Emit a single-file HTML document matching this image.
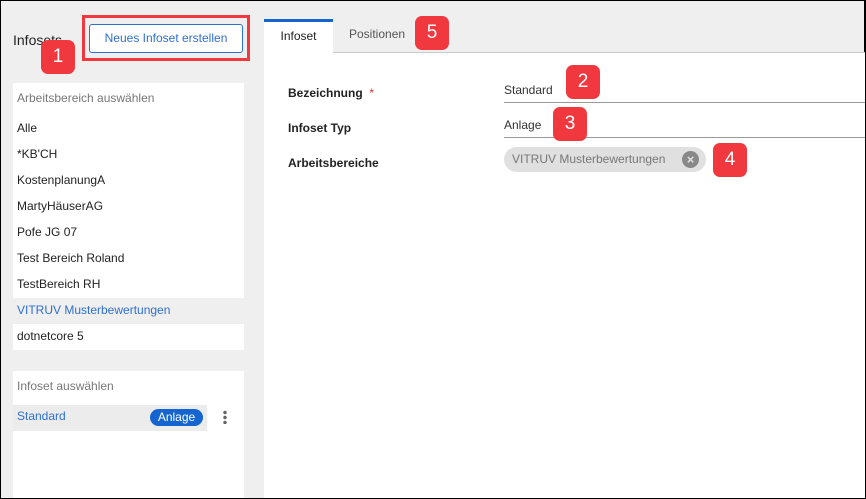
<!DOCTYPE html><html><head><style>
*{margin:0;padding:0;box-sizing:border-box}
body{width:866px;height:499px;overflow:hidden;font-family:"Liberation Sans",sans-serif;font-size:12px;color:#222;background:#000;position:relative}
.a{position:absolute}
.badge{position:absolute;width:34px;height:34px;background:#f0383e;border-radius:7px;color:#fff;font-size:19px;text-align:center;line-height:34px}
.it{position:absolute;left:17px;font-size:12px}
</style></head><body>
<div class="a" style="left:1px;top:1px;width:863px;height:497px;background:#efefef"></div>
<div class="a" style="left:264px;top:52px;width:601px;height:446px;background:#fff;border-top:1px solid #ccc"></div>
<div class="a" style="left:13px;top:32px;font-size:14px;color:#222">Infosets</div>
<div class="a" style="left:82px;top:15px;width:168px;height:46px;border:3px solid #f0383e"></div>
<div class="a" style="left:89px;top:24px;width:154px;height:29px;border:1px solid #2f6fd1;border-radius:3px;background:#fff;color:#2f6fd1;text-align:center;line-height:27px;font-size:12px">Neues Infoset erstellen</div>
<div class="badge" style="left:41px;top:40px">1</div>
<div class="a" style="left:13px;top:83px;width:231px;height:267px;background:#fff"></div>
<div class="a" style="left:13px;top:298px;width:231px;height:26px;background:#efefef"></div>
<div class="it" style="top:91px;color:#777">Arbeitsbereich auswählen</div>
<div class="it" style="top:121px">Alle</div>
<div class="it" style="top:147px">*KB'CH</div>
<div class="it" style="top:173px">KostenplanungA</div>
<div class="it" style="top:199px">MartyHäuserAG</div>
<div class="it" style="top:225px">Pofe JG 07</div>
<div class="it" style="top:251px">Test Bereich Roland</div>
<div class="it" style="top:277px">TestBereich RH</div>
<div class="it" style="top:303px;color:#2f6fd1">VITRUV Musterbewertungen</div>
<div class="it" style="top:329px">dotnetcore 5</div>
<div class="a" style="left:13px;top:371px;width:231px;height:127px;background:#fff"></div>
<div class="it" style="top:379px;color:#777">Infoset auswählen</div>
<div class="a" style="left:13px;top:405px;width:194px;height:26px;background:#ececec"></div>
<div class="it" style="top:409px;color:#2f6fd1">Standard</div>
<div class="a" style="left:150px;top:409px;width:53px;height:17px;border-radius:9px;background:#1565d0;color:#fff;text-align:center;line-height:17px;font-size:12px">Anlage</div>
<div class="a" style="left:223px;top:410px;width:4px;height:14px;background:radial-gradient(circle,#666 1.5px,transparent 2px) 0 0/4px 5px"></div>
<div class="a" style="left:264px;top:19px;width:69px;height:34px;background:#fff;border-top:3px solid #1565d0;text-align:center;line-height:28px;font-size:12px">Infoset</div>
<div class="a" style="left:349px;top:27px;color:#555">Positionen</div>
<div class="badge" style="left:415px;top:16px">5</div>
<div class="a" style="left:288px;top:86px;font-weight:bold">Bezeichnung <span style="color:#d33;font-weight:normal">&nbsp;*</span></div>
<div class="a" style="left:288px;top:121px;font-weight:bold">Infoset Typ</div>
<div class="a" style="left:288px;top:156px;font-weight:bold">Arbeitsbereiche</div>
<div class="a" style="left:504px;top:83px;color:#333">Standard</div>
<div class="a" style="left:504px;top:102px;width:361px;height:1px;background:#999"></div>
<div class="a" style="left:504px;top:118px;color:#333">Anlage</div>
<div class="a" style="left:504px;top:137px;width:361px;height:1px;background:#999"></div>
<div class="a" style="left:504px;top:147px;width:202px;height:25px;border-radius:13px;background:#e0e0e0;color:#777;line-height:25px;padding-left:8px">VITRUV Musterbewertungen</div>
<div class="a" style="left:682px;top:151px;width:17px;height:17px;border-radius:50%;background:#888;color:#e0e0e0;text-align:center;line-height:17px;font-size:13px;font-weight:bold">×</div>
<div class="badge" style="left:566px;top:65px">2</div>
<div class="badge" style="left:553px;top:107px">3</div>
<div class="badge" style="left:713px;top:143px">4</div>
</body></html>
